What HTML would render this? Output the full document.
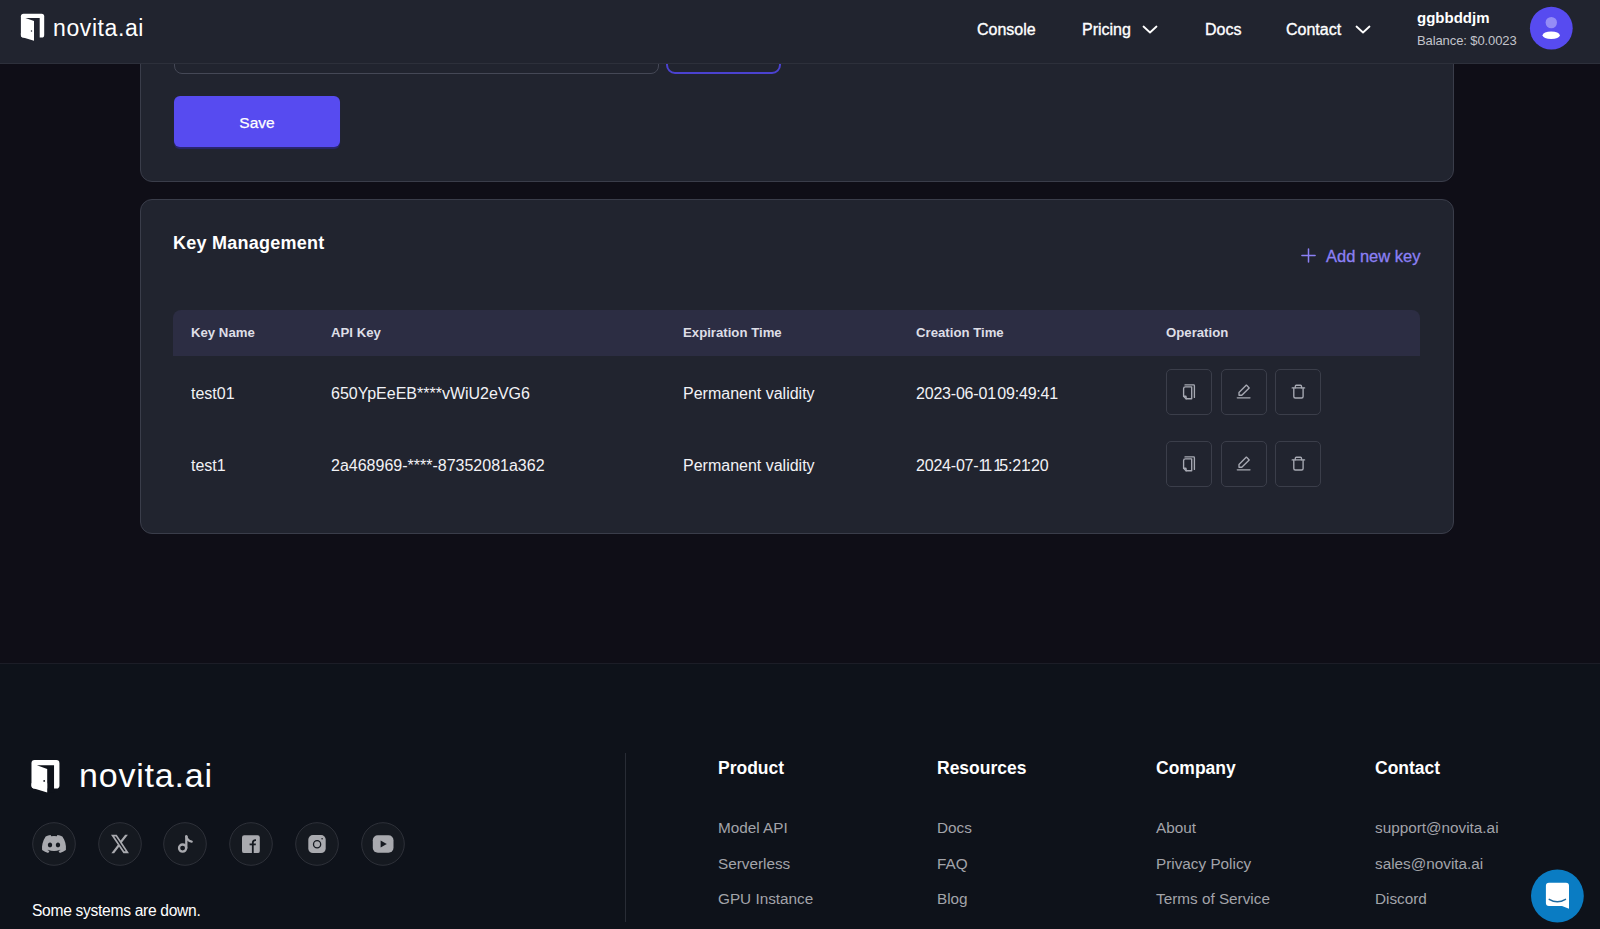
<!DOCTYPE html>
<html>
<head>
<meta charset="utf-8">
<style>
*{box-sizing:border-box;margin:0;padding:0}
html,body{width:1600px;height:929px;overflow:hidden}
body{background:#0f0e17;font-family:"Liberation Sans",sans-serif;color:#fff;position:relative}
.abs{position:absolute}
/* header */
#hdr{position:absolute;left:0;top:0;width:1600px;height:64px;background:#21242f;border-bottom:1px solid #2d303b;z-index:5}
.nav{position:absolute;top:20.5px;font-size:16px;color:#fff;line-height:18px;white-space:nowrap;-webkit-text-stroke:0.35px #fff}
.chev{position:absolute;top:25px}
/* cards */
.card{position:absolute;left:140px;width:1314px;background:#21242f;border:1px solid #3a3d4a;border-radius:12px}
.th{position:absolute;top:0;font-size:13.2px;font-weight:bold;color:#dedee6;line-height:45px;white-space:nowrap}
.td{position:absolute;font-size:16px;color:#f2f2f6;white-space:nowrap;line-height:18px}
.n1{letter-spacing:-3px}
.op{position:absolute;width:46px;height:46px;border:1px solid #3b3e4a;border-radius:5px}
.op svg{position:absolute;left:-1px;top:-1px}
/* footer */
#ftr{position:absolute;left:0;top:663px;width:1600px;height:266px;background:#0e121a;border-top:1px solid #1c1d27}
.soc{position:absolute;top:158px;width:44px;height:44px;border-radius:50%;border:1px solid #2a2e37;background:#12161e}
.soc svg{position:absolute;left:0;top:0}
.fh{position:absolute;top:94px;font-size:17.5px;font-weight:bold;color:#fff;white-space:nowrap;line-height:20px}
.fl{position:absolute;font-size:15.3px;color:#a3a4aa;white-space:nowrap;line-height:18px}
</style>
</head>
<body>
<!-- header -->
<div id="hdr">
  <svg class="abs" style="left:20px;top:12px" width="26" height="30" viewBox="0 0 26 30">
    <rect x="0.9" y="1.7" width="23.3" height="23.8" rx="2.6" fill="#fff"/>
    <path d="M5.4 6H19.7V29H14V9.1z" fill="#21242f"/>
    <path d="M0.9 21H14V28.7L2.4 25.2Q0.9 24.8 0.9 23.3z" fill="#fff"/>
    <circle cx="11.5" cy="19.1" r="0.75" fill="#21242f"/>
  </svg>
  <div class="abs" style="left:53px;top:15px;font-size:23px;line-height:26px;color:#fff;letter-spacing:0.6px">novita.ai</div>

  <div class="nav" style="left:977px">Console</div>
  <div class="nav" style="left:1082px">Pricing</div>
  <svg class="chev" style="left:1142px" width="16" height="9" viewBox="0 0 16 9"><path d="M1.5 1.5l6.5 6 6.5-6" stroke="#fff" stroke-width="1.8" fill="none" stroke-linecap="round" stroke-linejoin="round"/></svg>
  <div class="nav" style="left:1205px">Docs</div>
  <div class="nav" style="left:1286px">Contact</div>
  <svg class="chev" style="left:1355px" width="16" height="9" viewBox="0 0 16 9"><path d="M1.5 1.5l6.5 6 6.5-6" stroke="#fff" stroke-width="1.8" fill="none" stroke-linecap="round" stroke-linejoin="round"/></svg>

  <div class="abs" style="left:1417px;top:9px;font-size:15px;font-weight:bold;line-height:17px;color:#fff">ggbbddjm</div>
  <div class="abs" style="left:1417px;top:33px;font-size:13px;line-height:15px;color:#c3c4cc;letter-spacing:-0.1px">Balance: $0.0023</div>
  <svg class="abs" style="left:1529px;top:6px" width="44" height="44" viewBox="0 0 44 44">
    <circle cx="22.3" cy="22.2" r="21.4" fill="#574bf0"/>
    <circle cx="22.3" cy="16.6" r="5.7" fill="#948cf6"/>
    <ellipse cx="22.2" cy="29.3" rx="8.6" ry="3.8" fill="#fff"/>
  </svg>
</div>

<!-- card 1 (form, cropped) -->
<div class="card" style="top:-60px;height:242px">
  <div class="abs" style="left:33px;top:66px;width:485px;height:67px;border:1px solid #454856;border-radius:8px"></div>
  <div class="abs" style="left:525px;top:66px;width:115px;height:67px;border:2px solid #4b42d0;border-radius:9px"></div>
  <div class="abs" style="left:33px;top:155px;width:166px;height:51px;background:#574bf0;border-radius:6px;box-shadow:0 2px 1px #2a2670;font-size:15.5px;line-height:54px;text-align:center;color:#fff;-webkit-text-stroke:0.25px #fff">Save</div>
</div>

<!-- card 2 key management -->
<div class="card" style="top:199px;height:335px">
  <div class="abs" style="left:32px;top:32px;font-size:18px;font-weight:bold;line-height:22px;color:#fff;letter-spacing:0.25px">Key Management</div>
  <svg class="abs" style="left:1160px;top:48px" width="15" height="15" viewBox="0 0 15 15"><path d="M7.5 0.9v13.2M0.9 7.5h13.2" stroke="#8c80f5" stroke-width="1.5" stroke-linecap="round"/></svg>
  <div class="abs" style="left:1185px;top:47px;font-size:16.5px;line-height:19px;color:#8c80f5;-webkit-text-stroke:0.3px #8c80f5">Add new key</div>

  <div class="abs" style="left:32px;top:110px;width:1247px;height:46px;background:#2c2d43;border-radius:8px 8px 0 0"></div>
  <div class="th" style="left:50px;top:110px">Key Name</div>
  <div class="th" style="left:190px;top:110px">API Key</div>
  <div class="th" style="left:542px;top:110px">Expiration Time</div>
  <div class="th" style="left:775px;top:110px">Creation Time</div>
  <div class="th" style="left:1025px;top:110px">Operation</div>

  <div class="td" style="left:50px;top:185px">test01</div>
  <div class="td" style="left:190px;top:185px">650YpEeEB****vWiU2eVG6</div>
  <div class="td" style="left:542px;top:185px">Permanent validity</div>
  <div class="td" style="left:775px;top:185px;letter-spacing:-0.2px">2023-06-0<span class="n1">1</span> 09:49:4<span class="n1">1</span></div>

  <div class="td" style="left:50px;top:257px">test1</div>
  <div class="td" style="left:190px;top:257px">2a468969-****-87352081a362</div>
  <div class="td" style="left:542px;top:257px">Permanent validity</div>
  <div class="td" style="left:775px;top:257px;letter-spacing:-0.2px">2024-07-<span class="n1">1</span><span class="n1">1</span> <span class="n1">1</span>5:2<span class="n1">1</span>:20</div>

  <!-- ops row1 -->
  <div class="op" style="left:1025px;top:169px"><svg width="46" height="46" viewBox="0 0 46 46" fill="none" stroke="#a7a9b3" stroke-width="1.35" stroke-linejoin="round" stroke-linecap="round"><path d="M19 15.9H27.6Q28.4 15.9 28.4 16.7V28.4"/><path d="M17.6 19.6Q17.6 17.8 19.4 17.8H25.7V29.7H20.1L17.6 27.2Z"/><path d="M17.6 27.2H19.4Q20.1 27.2 20.1 27.9V29.7"/></svg></div>
  <div class="op" style="left:1080px;top:169px"><svg width="46" height="46" viewBox="0 0 46 46" fill="none" stroke="#a7a9b3" stroke-width="1.35" stroke-linejoin="round" stroke-linecap="round"><path d="M18 26.2V23.5L25.4 16.1L28.2 18.9L20.8 26.2Z"/><path d="M16.3 28.8H29"/></svg></div>
  <div class="op" style="left:1134px;top:169px"><svg width="46" height="46" viewBox="0 0 46 46" fill="none" stroke="#a7a9b3" stroke-width="1.35" stroke-linejoin="round" stroke-linecap="round"><path d="M17.2 18.9H29.6"/><path d="M20.3 18.7V17.2Q20.3 16.2 21.3 16.2H25.5Q26.5 16.2 26.5 17.2V18.7"/><path d="M18.8 19.2V27.5Q18.8 29 20.3 29H26.6Q28.1 29 28.1 27.5V19.2"/></svg></div>
  <div class="op" style="left:1025px;top:241px"><svg width="46" height="46" viewBox="0 0 46 46" fill="none" stroke="#a7a9b3" stroke-width="1.35" stroke-linejoin="round" stroke-linecap="round"><path d="M19 15.9H27.6Q28.4 15.9 28.4 16.7V28.4"/><path d="M17.6 19.6Q17.6 17.8 19.4 17.8H25.7V29.7H20.1L17.6 27.2Z"/><path d="M17.6 27.2H19.4Q20.1 27.2 20.1 27.9V29.7"/></svg></div>
  <div class="op" style="left:1080px;top:241px"><svg width="46" height="46" viewBox="0 0 46 46" fill="none" stroke="#a7a9b3" stroke-width="1.35" stroke-linejoin="round" stroke-linecap="round"><path d="M18 26.2V23.5L25.4 16.1L28.2 18.9L20.8 26.2Z"/><path d="M16.3 28.8H29"/></svg></div>
  <div class="op" style="left:1134px;top:241px"><svg width="46" height="46" viewBox="0 0 46 46" fill="none" stroke="#a7a9b3" stroke-width="1.35" stroke-linejoin="round" stroke-linecap="round"><path d="M17.2 18.9H29.6"/><path d="M20.3 18.7V17.2Q20.3 16.2 21.3 16.2H25.5Q26.5 16.2 26.5 17.2V18.7"/><path d="M18.8 19.2V27.5Q18.8 29 20.3 29H26.6Q28.1 29 28.1 27.5V19.2"/></svg></div>
</div>

<!-- footer -->
<div id="ftr">
  <svg class="abs" style="left:30px;top:94px" width="32" height="36" viewBox="0 0 26 30">
    <rect x="0.9" y="1.7" width="23.3" height="23.8" rx="2.6" fill="#fff"/>
    <path d="M5.4 6H19.7V29H14V9.1z" fill="#0e121a"/>
    <path d="M0.9 21H14V28.7L2.4 25.2Q0.9 24.8 0.9 23.3z" fill="#fff"/>
    <circle cx="11.5" cy="19.1" r="0.75" fill="#0e121a"/>
  </svg>
  <div class="abs" style="left:79px;top:92px;font-size:34px;line-height:38px;color:#fff;letter-spacing:0.8px">novita.ai</div>

  <svg class="abs" style="left:32px;top:158px" width="44" height="44" viewBox="0 0 44 44"><circle cx="22" cy="22" r="21.3" fill="#151920" stroke="#2e3139" stroke-width="1"/><g transform="translate(10,12.9) scale(0.1888)"><path fill="#a9aaaf" d="M107.7,8.07A105.15,105.15,0,0,0,81.47,0a72.06,72.06,0,0,0-3.36,6.83A97.68,97.68,0,0,0,49,6.83,72.37,72.37,0,0,0,45.64,0,105.89,105.89,0,0,0,19.39,8.09C2.79,32.65-1.710,56.6.54,80.21h0A105.73,105.73,0,0,0,32.71,96.36,77.7,77.7,0,0,0,39.6,85.25a68.42,68.42,0,0,1-10.850-5.18c.91-.66,1.8-1.34,2.66-2a75.57,75.57,0,0,0,64.32,0c.87.71,1.76,1.39,2.66,2a68.68,68.68,0,0,1-10.87,5.19,77,77,0,0,0,6.89,11.1A105.25,105.25,0,0,0,126.6,80.22h0C129.24,52.84,122.09,29.11,107.7,8.07ZM42.45,65.69C36.18,65.69,31,60,31,53s5-12.740,11.44-12.74S54,46,53.89,53,48.840,65.69,42.45,65.69Zm42.24,0C78.41,65.69,73.25,60,73.25,53s5-12.74,11.44-12.74S96.23,46,96.12,53,91.08,65.69,84.69,65.69Z"/></g></svg>
  <svg class="abs" style="left:97.7px;top:158px" width="44" height="44" viewBox="0 0 44 44"><circle cx="22" cy="22" r="21.3" fill="#151920" stroke="#2e3139" stroke-width="1"/><g transform="translate(11.95,10.56) scale(0.834,0.95)"><path fill="#a9aaaf" d="M18.244 2.25h3.308l-7.227 8.26 8.502 11.24H16.17l-5.214-6.817L4.99 21.75H1.68l7.73-8.835L1.254 2.25H8.08l4.713 6.231zm-1.161 17.52h1.833L7.084 4.126H5.117z"/></g></svg>
  <svg class="abs" style="left:163.4px;top:158px" width="44" height="44" viewBox="0 0 44 44"><circle cx="22" cy="22" r="21.3" fill="#151920" stroke="#2e3139" stroke-width="1"/><g fill="none" stroke="#a9aaaf" stroke-width="2.3" stroke-linecap="round"><circle cx="19.6" cy="26.1" r="3.6"/><path d="M23.3 14.3V26"/><path d="M23.3 14.3Q24.2 18.9 28.7 19.6"/></g></svg>
  <svg class="abs" style="left:229.1px;top:158px" width="44" height="44" viewBox="0 0 44 44"><circle cx="22" cy="22" r="21.3" fill="#151920" stroke="#2e3139" stroke-width="1"/><rect x="13" y="13.3" width="17.8" height="17.8" rx="2.2" fill="#a9aaaf"/><g fill="none" stroke="#151920" stroke-width="1.8"><path d="M23.8 31.5V20.8Q23.8 18.1 26.6 18.1H27"/><path d="M20.6 22.4H26.8"/></g></svg>
  <svg class="abs" style="left:294.8px;top:158px" width="44" height="44" viewBox="0 0 44 44"><circle cx="22" cy="22" r="21.3" fill="#151920" stroke="#2e3139" stroke-width="1"/><rect x="13.3" y="13.1" width="17.4" height="18" rx="4.6" fill="#a9aaaf"/><circle cx="22.1" cy="22.2" r="3.6" fill="none" stroke="#151920" stroke-width="1.3"/><circle cx="27.1" cy="16.8" r="0.8" fill="#151920"/></svg>
  <svg class="abs" style="left:360.5px;top:158px" width="44" height="44" viewBox="0 0 44 44"><circle cx="22" cy="22" r="21.3" fill="#151920" stroke="#2e3139" stroke-width="1"/><rect x="11.8" y="13.3" width="20.7" height="17.5" rx="5" fill="#a9aaaf"/><path d="M19.6 18.6V25.5L25.8 22z" fill="#151920"/></svg>
  

  <div class="abs" style="left:32px;top:238px;font-size:15.6px;line-height:18px;color:#fff;letter-spacing:-0.3px">Some systems are down.</div>

  <div class="abs" style="left:625px;top:89px;width:1px;height:169px;background:#282c35"></div>

  <div class="fh" style="left:718px">Product</div>
  <div class="fh" style="left:937px">Resources</div>
  <div class="fh" style="left:1156px">Company</div>
  <div class="fh" style="left:1375px">Contact</div>

  <div class="fl" style="left:718px;top:155px">Model API</div>
  <div class="fl" style="left:718px;top:191px">Serverless</div>
  <div class="fl" style="left:718px;top:226px">GPU Instance</div>
  <div class="fl" style="left:937px;top:155px">Docs</div>
  <div class="fl" style="left:937px;top:191px">FAQ</div>
  <div class="fl" style="left:937px;top:226px">Blog</div>
  <div class="fl" style="left:1156px;top:155px">About</div>
  <div class="fl" style="left:1156px;top:191px">Privacy Policy</div>
  <div class="fl" style="left:1156px;top:226px">Terms of Service</div>
  <div class="fl" style="left:1375px;top:155px">support@novita.ai</div>
  <div class="fl" style="left:1375px;top:191px">sales@novita.ai</div>
  <div class="fl" style="left:1375px;top:226px">Discord</div>

  <svg class="abs" style="left:1530px;top:205px" width="54" height="54" viewBox="0 0 54 54">
    <circle cx="27.4" cy="27" r="26.4" fill="#0a7cc3"/>
    <path d="M19 13.7H36Q39 13.7 39 16.7V39.7L32 37H19Q15.9 37 15.9 34V16.7Q15.9 13.7 19 13.7Z" fill="#fff"/>
    <path d="M19.2 30.3Q27.3 35.2 35.5 30.3" fill="none" stroke="#1f6aa0" stroke-width="1.4" stroke-linecap="round"/>
  </svg>
</div>
</body>
</html>
